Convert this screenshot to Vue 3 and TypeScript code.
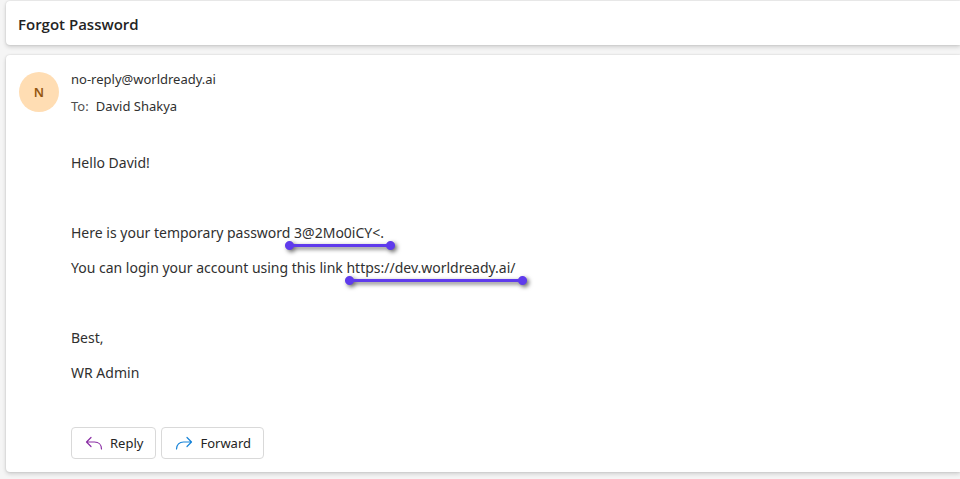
<script setup lang="ts">
interface Segment {
  text: string
  mark?: 'secret' | 'link'
}

const subject = 'Forgot Password'
const sender = 'no-reply@worldready.ai'
const recipient = 'David Shakya'

const paragraphs: Segment[][] = [
  [{ text: 'Hello David!' }],
  [],
  [{ text: 'Here is your temporary password ' }, { text: '3@2Mo0iCY<.', mark: 'secret' }],
  [{ text: 'You can login your account using this link ' }, { text: 'https://dev.worldready.ai/', mark: 'link' }],
  [],
  [{ text: 'Best,' }],
  [{ text: 'WR Admin' }],
]
</script>

<template>
  <main class="mail">
    <header class="card subject">
      <h1>{{ subject }}</h1>
    </header>
    <article class="card message">
      <div class="avatar" aria-hidden="true">N</div>
      <div class="content">
        <div class="sender">{{ sender }}</div>
        <div class="recipients"><span class="to">To:</span><span>{{ recipient }}</span></div>
        <div class="body">
          <p v-for="(paragraph, i) in paragraphs" :key="i"><span v-for="(segment, j) in paragraph" :key="j" :class="segment.mark && ['marked', segment.mark]">{{ segment.text }}</span></p>
        </div>
        <div class="actions">
          <button type="button">
            <svg class="reply-icon" width="18" height="16" viewBox="0 0 18 16" aria-hidden="true">
              <path d="M6 2.5 L1.5 7 L6 11.5 M1.5 7 H9.5 C13.5 7 16.5 9.5 16.5 14" />
            </svg>
            Reply
          </button>
          <button type="button">
            <svg class="forward-icon" width="18" height="16" viewBox="0 0 18 16" aria-hidden="true">
              <path d="M12 2.5 L16.5 7 L12 11.5 M16.5 7 H8.5 C4.5 7 1.5 9.5 1.5 14" />
            </svg>
            Forward
          </button>
        </div>
      </div>
    </article>
  </main>
</template>

<style>
body {
  background: #f5f5f5;
}
</style>

<style scoped>
.mail {
  display: flex;
  flex-direction: column;
  gap: 10px;
  padding: 1px 0 7px 6px;
  overflow: hidden;
  color: #303030;
  font-family: "Noto Sans", "Open Sans", sans-serif;
  font-size: 14px;
  line-height: 20px;
}

.card {
  background: #fff;
  border-radius: 4px 0 0 4px;
  box-shadow: 0 0 2px rgba(0, 0, 0, 0.14), 0 2px 4px rgba(0, 0, 0, 0.16);
}

.subject {
  padding: 13px 12px 11px;
}

h1 {
  margin: 0;
  color: #242424;
  font-family: "Open Sans", sans-serif;
  font-size: 15px;
  font-weight: 600;
  line-height: 20px;
}

.message {
  display: flex;
  align-items: flex-start;
  gap: 12px;
  padding: 14px 13px 13px;
}

.avatar {
  display: flex;
  flex: none;
  align-items: center;
  justify-content: center;
  width: 40px;
  height: 40px;
  margin-top: 3px;
  border-radius: 50%;
  background: #ffddb3;
  color: #945610;
  font-size: 13px;
  font-weight: 600;
}

.content {
  flex: 1;
  min-width: 0;
}

.sender,
.recipients {
  font-size: 13px;
}

.recipients {
  display: flex;
  gap: 7px;
  margin-top: 7px;
}

.to {
  color: #505050;
}

.body {
  display: grid;
  gap: 15px;
  margin-top: 37px;
}

p {
  min-height: 20px;
  margin: 0;
}

.marked {
  position: relative;
}

.marked::after {
  content: "";
  position: absolute;
  right: -11px;
  bottom: -8px;
  height: 9px;
  background:
    radial-gradient(circle, #5f3bec 4px, transparent 5px) left / 9px 9px no-repeat,
    radial-gradient(circle, #5f3bec 4px, transparent 5px) right / 9px 9px no-repeat,
    linear-gradient(#5f3bec, #5f3bec) center / calc(100% - 8px) 3px no-repeat;
  filter: drop-shadow(2px 2px 2px rgba(0, 0, 0, 0.6));
}

.secret::after {
  left: -9px;
}

.link::after {
  left: -1px;
}

.actions {
  display: flex;
  gap: 5px;
  margin-top: 44px;
}

button {
  display: flex;
  align-items: center;
  gap: 7px;
  padding: 5px 12px 5px 13px;
  border: 1px solid #d9d9d9;
  border-radius: 4px;
  background: #fff;
  color: #242424;
  font: inherit;
  font-size: 13px;
}

svg {
  fill: none;
  stroke-width: 1.2;
  stroke-linecap: round;
  stroke-linejoin: round;
}

.reply-icon {
  stroke: #8b2fa5;
}

.forward-icon {
  stroke: #1683d8;
}
</style>
